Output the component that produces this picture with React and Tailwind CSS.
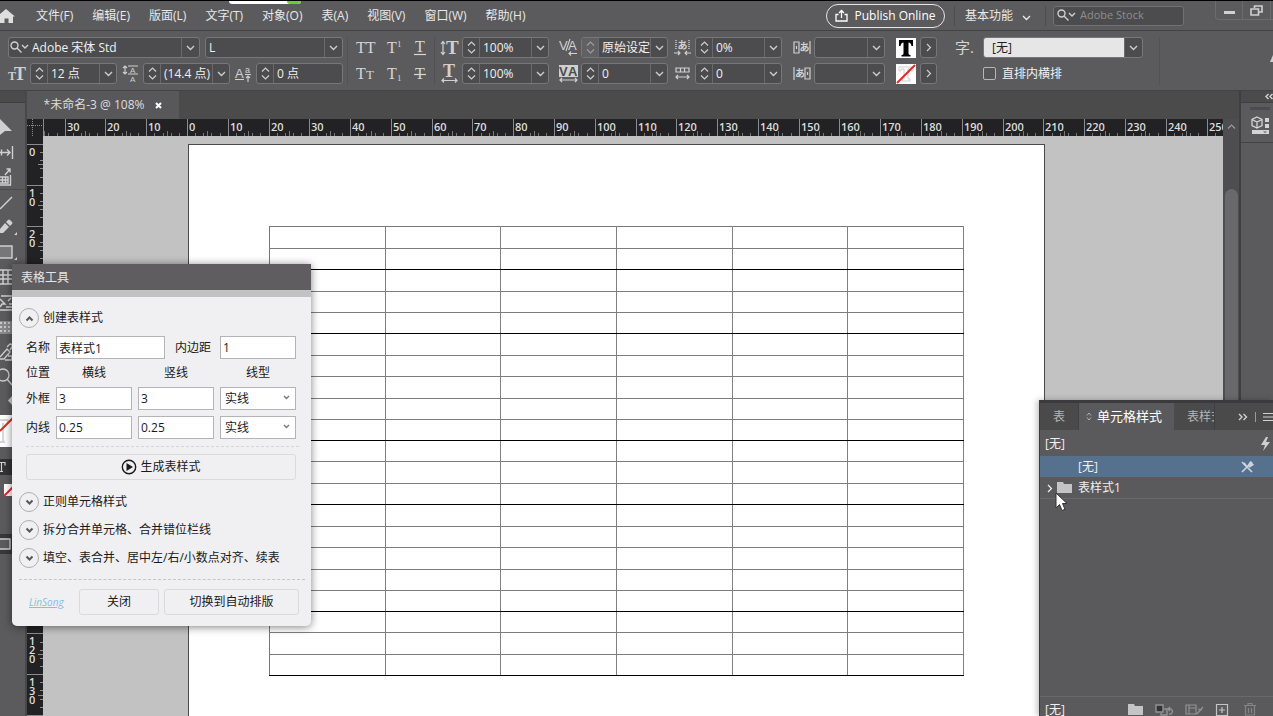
import React from "react";

const FONT = "font-['Open_Sans','Noto_Sans_CJK_SC',sans-serif]";

function Svg({ w = 16, h = 16, children, className = "" }) {
  return (
    <svg
      width={w}
      height={h}
      viewBox={`0 0 ${w} ${h}`}
      fill="none"
      stroke="currentColor"
      strokeWidth="1.4"
      aria-hidden="true"
      className={`shrink-0 overflow-visible ${className}`}
    >
      {children}
    </svg>
  );
}

const Chevron = ({ className = "" }) => (
  <Svg w={9} h={6} className={className}>
    <path d="M1 1l3.500 3.500L8 1" />
  </Svg>
);

const SerifT = ({ x, y, size = 16, children = "T", bold = false, fill = "currentColor" }) => (
  <text
    x={x}
    y={y}
    fontSize={size}
    fontFamily="'Liberation Serif', serif"
    fontWeight={bold ? 700 : 400}
    fill={fill}
    stroke="none"
  >
    {children}
  </text>
);

/* ---------- Menu bar ---------- */

const menus = ["文件(F)", "编辑(E)", "版面(L)", "文字(T)", "对象(O)", "表(A)", "视图(V)", "窗口(W)", "帮助(H)"];

function MenuBar() {
  return (
    <header className="relative flex h-[31px] shrink-0 items-center border-t border-b border-t-black border-b-[#424244] bg-[#5b5b5d] text-[#e8e8e8]">
      <a href="#home" aria-label="主页" className="mr-[21px] w-[15px] overflow-hidden text-[#dedede]">
        <Svg w={15} h={14}>
          <path d="M6 0l9 7.500h-2V14H8.500V9.500h-4V14H0V5z" fill="currentColor" stroke="none" />
        </Svg>
      </a>
      <nav className="flex gap-[19px]">
        {menus.map((m) => (
          <button key={m} type="button" className="whitespace-nowrap leading-[18px]">
            {m}
          </button>
        ))}
      </nav>
      <div className="absolute top-0 left-[229px] flex h-[3px] w-[72px] justify-end rounded-b-sm bg-white">
        <span className="w-[14px] rounded-b-full bg-[#62cf38]" />
      </div>

      <div className="ml-auto flex items-center">
        <button
          type="button"
          className="mr-[9px] flex h-6 w-[119px] items-center justify-center gap-[6px] rounded-full border border-[#e6e6e6] text-white"
        >
          <Svg w={13} h={13}>
            <path d="M3.500 5.500H1v6.500h11V5.500H9.500M6.500 9V1.500M4 4l2.500-2.500L9 4" strokeWidth="1.300" />
          </Svg>
          <span className="text-[12px] whitespace-nowrap">Publish Online</span>
        </button>
        <span className="mr-[10px] h-5 w-px bg-[#4e4e50]" />
        <button type="button" className="mr-[14px] flex items-center gap-[9px]">
          基本功能
          <Chevron className="mt-1" />
        </button>
        <span className="mr-[7px] h-5 w-px bg-[#4e4e50]" />
        <label className="mr-[31px] flex h-5 w-[131px] items-center rounded-[3px] border border-[#717173] bg-[#4c4c4e] pl-[3px]">
          <SearchIcon />
          <input
            type="search"
            aria-label="Adobe Stock"
            placeholder="Adobe Stock"
            className="ml-1 w-full min-w-0 bg-transparent text-[11px] outline-none placeholder:text-[#8e8e90]"
          />
        </label>
        <div className="-mt-[10px] flex h-[19px] rounded-bl border-b border-l border-[#6c6c6e]">
          <button type="button" aria-label="最小化" className="flex w-[27px] items-center justify-center border-r border-[#6c6c6e]">
            <span className="mt-1 h-[3px] w-[11px] bg-[#d0d0d0]" />
          </button>
          <button type="button" aria-label="还原" className="flex w-[28px] items-center justify-center border-r border-[#6c6c6e] text-[#d0d0d0]">
            <Svg w={13} h={11}>
              <path d="M4.500 3V1h7.500v6H8.500M1 4h7.500v6H1z" strokeWidth="1.600" />
            </Svg>
          </button>
          <span className="w-[2px]" />
        </div>
      </div>
    </header>
  );
}

function SearchIcon() {
  return (
    <Svg w={19} h={13} className="text-[#d0d0d0]">
      <circle cx="4.500" cy="4.500" r="3.500" />
      <path d="M7 7l4.500 4.500M12 4l3 3 3-3" />
    </Svg>
  );
}

/* ---------- Control bar ---------- */

const fieldBox = "flex h-[21px] shrink-0 overflow-hidden rounded-[3px] border border-[#77777a] bg-[#4c4c4f]";

function Combo({ label, value, stepper = true, arrow = true, width = "w-[87px]", muted = false }) {
  return (
    <div className={`${fieldBox} ${width}`}>
      {stepper && (
        <span className={`flex w-[17px] shrink-0 flex-col items-center justify-between border-r border-[#69696c] py-[3px] ${muted ? "bg-[#616164] text-[#9c9c9e]" : "text-[#cdcdcd]"}`}>
          <button type="button" aria-label={`${label} 增加`}>
            <Svg w={9} h={5} className="block"><path d="M1 4.500L4.500 1 8 4.500" strokeWidth="1.200" /></Svg>
          </button>
          <button type="button" aria-label={`${label} 减少`}>
            <Svg w={9} h={5} className="block"><path d="M1 .5L4.500 4 8 .5" strokeWidth="1.200" /></Svg>
          </button>
        </span>
      )}
      <input
        aria-label={label}
        defaultValue={value}
        className="w-0 min-w-0 flex-1 bg-transparent pl-[3px] text-[12px] text-[#f0f0f0] outline-none"
      />
      {arrow && (
        <button type="button" aria-label={`${label} 选项`} className="flex w-[17px] shrink-0 items-center justify-center border-l border-[#69696c] text-[#cdcdcd]">
          <Chevron />
        </button>
      )}
    </div>
  );
}

function DarkSelect({ label, value, width, search = false, light = false }) {
  return (
    <div className={`${fieldBox} ${width} relative`}>
      {search && <span className="flex items-center pl-px"><SearchIcon /></span>}
      <select
        aria-label={label}
        className={`min-w-0 flex-1 appearance-none text-[12px] leading-[19px] outline-none ${
          light ? "mr-[18px] bg-[#e6e6e6] pl-2 text-[#202020]" : "bg-transparent pl-[3px] text-[#f0f0f0]"
        }`}
      >
        <option>{value}</option>
      </select>
      <span className="pointer-events-none absolute inset-y-0 right-0 flex w-[18px] items-center justify-center border-l border-[#69696c] text-[#cdcdcd]">
        <Chevron />
      </span>
    </div>
  );
}

const IconCell = ({ w = "w-[19px]", children }) => (
  <span className={`flex h-[21px] ${w} shrink-0 items-center justify-center text-[#d0d0d0]`}>{children}</span>
);

const Pair = ({ className = "", children }) => (
  <div className={`flex shrink-0 flex-col gap-[5px] ${className}`}>{children}</div>
);

const Row = ({ gap = "gap-[3px]", children }) => <div className={`flex items-center ${gap}`}>{children}</div>;

const Divider = ({ className = "" }) => <span className={`h-[48px] w-px shrink-0 bg-[#525254] ${className}`} />;

const SizeIcon = () => (
  <Svg w={19} h={16}><SerifT x={0} y={14} size={12} bold /><SerifT x={6} y={14} size={18} bold /></Svg>
);
const LeadingIcon = () => (
  <Svg w={17} h={17}>
    <path d="M3 1v8M1 3l2-2 2 2M1 7l2 2 2-2M6 1h10M6 9h10" strokeWidth="1.100" />
    <text x="8" y="8" fontSize="8" fill="currentColor" stroke="none" fontFamily="Liberation Sans">A</text>
    <text x="8" y="16.500" fontSize="8" fill="currentColor" stroke="none" fontFamily="Liberation Sans">A</text>
  </Svg>
);
const BaselineIcon = () => (
  <Svg w={17} h={16}>
    <text x="0" y="12" fontSize="13" fill="currentColor" stroke="none" fontFamily="Liberation Sans">A</text>
    <text x="10" y="7" fontSize="9" fill="currentColor" stroke="none" fontFamily="Liberation Sans">a</text>
    <path d="M0 13.500h9M10 8.500h6M13 16v-6M11 12l2-2 2 2" strokeWidth="1.100" />
  </Svg>
);
const VScaleIcon = () => (
  <Svg w={19} h={16}>
    <path d="M3 2v12M1 4l2-2.500L5 4M1 12l2 2.500L5 12" strokeWidth="1.200" />
    <SerifT x={6} y={14} size={19} bold />
  </Svg>
);
const HScaleIcon = () => (
  <Svg w={17} h={18}>
    <SerifT x={2} y={12} size={18} bold />
    <path d="M1 15.500h15M3 13.500l-2 2 2 2M14 13.500l2 2-2 2" strokeWidth="1.200" />
  </Svg>
);
const SansVA = ({ fill = "currentColor", bold = false }) => (
  <g fontFamily="Liberation Sans" fontSize="13" fontWeight={bold ? 700 : 400} fill={fill} stroke="none">
    <text x="0" y="11">V</text>
    <text x="9" y="11">A</text>
  </g>
);
const KerningIcon = () => (
  <Svg w={19} h={17}>
    <SansVA />
    <path d="M11 0L7 12M10 14.500h8M12 12.500l-2 2 2 2" strokeWidth="1.100" />
  </Svg>
);
const TrackingIcon = () => (
  <Svg w={19} h={18}>
    <path d="M0 0h19v12H0z" fill="currentColor" stroke="none" />
    <SansVA fill="#4c4c4f" bold />
    <path d="M1 15h17M3 13l-2 2 2 2M16 13l2 2-2 2" strokeWidth="1.200" />
  </Svg>
);
const Kana = ({ x, y }) => (
  <text x={x} y={y} fontSize="10" fontWeight="700" fill="currentColor" stroke="none" fontFamily="Noto Sans CJK JP">あ</text>
);
const TsumeIcon = () => (
  <Svg w={17} h={17}>
    <Kana x={3.5} y={10} />
    <path d="M2 1v10M15 1v10" strokeDasharray="1 1" />
    <path d="M0 14h6M4 12l2 2-2 2M17 14h-6M13 12l-2 2 2 2" strokeWidth="1.100" />
  </Svg>
);
const GridIcon = () => (
  <Svg w={15} h={13}>
    <path d="M1 1h13v4H1zM5.500 1v4M9.500 1v4M1 10h13M3 8l-2 2 2 2M12 8l2 2-2 2" strokeWidth="1.200" />
  </Svg>
);
const AkiLeftIcon = () => (
  <Svg w={18} h={15}>
    <path d="M1 2h5v11H1zM3.500 6v3M17 1v13" strokeWidth="1.200" /><Kana x={6.5} y={11} />
  </Svg>
);
const AkiRightIcon = () => (
  <Svg w={18} h={15}>
    <path d="M12 2h5v11h-5zM14.500 6v3M1 1v13" strokeWidth="1.200" /><Kana x={2} y={11} />
  </Svg>
);

function TypeToggles() {
  const items = [
    ["全部大写", <Svg w={20} h={16} key="a"><SerifT x={0} y={13} size={16}>TT</SerifT></Svg>],
    ["上标", <Svg w={16} h={16} key="b"><SerifT x={0} y={13} size={16} /><SerifT x={10} y={7} size={9}>1</SerifT></Svg>],
    ["下划线", <Svg w={12} h={16} key="c"><SerifT x={1} y={12} size={16} /><path d="M0 14.500h12" strokeWidth="1.200" /></Svg>],
    ["小型大写字母", <Svg w={20} h={16} key="d"><SerifT x={0} y={13} size={16} /><SerifT x={10} y={13} size={13} /></Svg>],
    ["下标", <Svg w={16} h={16} key="e"><SerifT x={0} y={13} size={16} /><SerifT x={10} y={15} size={9}>1</SerifT></Svg>],
    ["删除线", <Svg w={12} h={16} key="f"><SerifT x={1} y={13} size={16} /><path d="M0 8.500h12" strokeWidth="1.200" /></Svg>],
  ];
  return (
    <div className="grid shrink-0 grid-cols-[20px_16px_12px] gap-x-[11px] gap-y-[5px]">
      {items.map(([name, icon]) => (
        <button key={name} type="button" aria-label={name} className="flex h-[21px] items-center justify-center text-[#d6d6d6]">
          {icon}
        </button>
      ))}
    </div>
  );
}

const MoreButton = ({ label }) => (
  <button type="button" aria-label={label} className={`${fieldBox} w-[17px] items-center justify-center text-[#cdcdcd]`}>
    <Svg w={6} h={9}><path d="M1 1l3.500 3.500L1 8" strokeWidth="1.200" /></Svg>
  </button>
);

function ControlBar() {
  return (
    <section aria-label="控制" className="relative flex h-[60px] shrink-0 items-center overflow-hidden border-b border-[#434345] bg-[#5b5b5d] pl-2">
      <Pair>
        <Row gap="gap-[5px]">
          <DarkSelect label="字体" value="Adobe 宋体 Std" width="w-[192px]" search />
          <DarkSelect label="字体样式" value="L" width="w-[138px]" />
        </Row>
        <Row>
          <IconCell><SizeIcon /></IconCell>
          <Combo label="字号" value="12 点" />
          <IconCell w="w-[20px]"><LeadingIcon /></IconCell>
          <Combo label="行距" value="(14.4 点)" />
          <IconCell w="w-[20px]"><BaselineIcon /></IconCell>
          <Combo label="基线偏移" value="0 点" arrow={false} />
        </Row>
      </Pair>
      <Divider className="mr-[8px] ml-[4px]" />
      <TypeToggles />
      <Divider className="mr-[5px] ml-[8px]" />
      <Pair>
        <Row><IconCell><VScaleIcon /></IconCell><Combo label="垂直缩放" value="100%" /></Row>
        <Row><IconCell><HScaleIcon /></IconCell><Combo label="水平缩放" value="100%" /></Row>
      </Pair>
      <Pair className="ml-[10px]">
        <Row><IconCell><KerningIcon /></IconCell><Combo label="字偶间距" value="原始设定" muted /></Row>
        <Row><IconCell><TrackingIcon /></IconCell><Combo label="字符间距" value="0" /></Row>
      </Pair>
      <Pair className="ml-[5px]">
        <Row><IconCell><TsumeIcon /></IconCell><Combo label="比例间距" value="0%" /></Row>
        <Row><IconCell><GridIcon /></IconCell><Combo label="网格指定格数" value="0" /></Row>
      </Pair>
      <Pair className="ml-[10px]">
        <Row><IconCell><AkiLeftIcon /></IconCell><Combo label="字符前挤压间距" value="" stepper={false} width="w-[71px]" /></Row>
        <Row><IconCell><AkiRightIcon /></IconCell><Combo label="字符后挤压间距" value="" stepper={false} width="w-[71px]" /></Row>
      </Pair>
      <Pair className="ml-[11px]">
        <Row gap="gap-[4px]">
          <button type="button" aria-label="填色">
            <Svg w={20} h={20}><path d="M0 0h20v20H0z" fill="#fff" stroke="none" /><path d="M3 2h14v6h-1.500Q15 4.500 12.500 4.500v11q0 1.500 2 1.500v1.500H5.500V17q2 0 2-1.500v-11Q5 4.500 4.500 8H3z" fill="#000" stroke="none" /></Svg>
          </button>
          <MoreButton label="填色选项" />
        </Row>
        <Row gap="gap-[4px]">
          <button type="button" aria-label="描边">
            <Svg w={20} h={20}><path d="M0 0h20v20H0z" fill="#fff" stroke="none" /><path d="M3 3h14v4h-2V5h-3v10h2v2H6v-2h2V5H5v2H3z" stroke="#cfcfcf" strokeWidth="1" /><path d="M1 19L19 1" stroke="#dc2b22" strokeWidth="2" /></Svg>
          </button>
          <MoreButton label="描边选项" />
        </Row>
      </Pair>
      <span className="mb-[28px] ml-[18px] w-[28px] shrink-0 text-[15px] leading-5 text-[#d6d6d6]">字.</span>
      <Pair>
        <DarkSelect label="字符样式" value="[无]" width="w-[160px]" light />
        <label className="flex h-[21px] items-center gap-[6px] text-[12px] text-[#f0f0f0]">
          <input type="checkbox" className="h-[13px] w-[13px] appearance-none rounded-[2px] border border-[#b6b6b8] bg-[#555557]" />
          直排内横排
        </label>
      </Pair>
      <Divider className="ml-[16px]" />
      <span className="absolute right-0 top-6 text-[#d0d0d0]">
        <Svg w={3} h={7}><path d="M3 0v7H0z" fill="currentColor" stroke="none" /></Svg>
      </span>
    </section>
  );
}

/* ---------- Tool strip ---------- */

const tools = [
  ["选择工具", <path key="p" d="M0 4l12 12H5l-5 4z" fill="currentColor" stroke="none" />],
  ["间隙工具", <path key="p" d="M12.500 6v13M0 12.500h10M7 9.500l3 3-3 3M1.500 9.500v6" />],
  ["内容收集器", <path key="p" d="M0 12h8v6H0M0 15h8M2.500 12v6M5.500 12v6M10.500 10v10H0M5 10l5-6M6.500 4H10v3.500" />],
  ["直线工具", <path key="p" d="M0 19L12 7" />],
  ["铅笔工具", <g key="p" fill="currentColor" stroke="none"><path d="M0 14l5-6 4 4-6 6H0zM6 7l2-2q1-1 2 0l2 2q1 1 0 2l-2 2zM17 17v3h-3z" /></g>],
  ["矩形工具", <g key="p"><path d="M-2 6h14v12H-2z" fill="#77777a" /><path d="M17 17v3h-3z" fill="currentColor" stroke="none" /></g>],
  ["表格工具", <path key="p" d="M0 5h12M0 10h12M0 14h12M0 19h12M3 5v14M8 5v14" />],
  ["自由变换", <path key="p" d="M0 9l5 5H2l-2 3M1 6h11M8 11l3-3M6 17h6M0 20h12M9 14h3" />],
  ["渐变羽化", <g key="p"><path d="M0 6h12v13H0z" fill="#8a8a8c" stroke="none" /><path d="M0 8h12M0 12h12M0 16h12" strokeDasharray="2 2" stroke="#c8c8c8" strokeWidth="2" /></g>],
  ["吸管工具", <path key="p" d="M0 17l7-8 3 3-6 7H0M7 7l3-3q3 0 2 3l-2 3M5 20h7v-4H8" />],
  ["缩放工具", <g key="p"><circle cx="3" cy="10" r="6" /><path d="M7 14l5 6" /></g>],
  ["交换填色和描边", <path key="p" d="M12 6v9l-4-4.500z" fill="currentColor" stroke="none" />],
];

function ToolStrip() {
  return (
    <aside className="flex w-[27px] shrink-0 flex-col overflow-hidden border-r-2 border-[#48484a] bg-[#5b5b5d] text-[#d0d0d0]">
      <div className="h-3 shrink-0 border-b border-[#3f3f41] bg-[#4b4b4c]" />
      <div className="flex flex-col pt-3">
        {tools.map(([name, icon], i) => (
          <button key={name} type="button" aria-label={name} className={`h-[25px] ${i === 3 ? "shadow-[0_-1px_0_#4c4c4e]" : ""}`}>
            <Svg w={20} h={25} className="block">{icon}</Svg>
          </button>
        ))}
      </div>
      <button type="button" aria-label="填色无" className="h-8">
        <Svg w={25} h={32} className="block">
          <path d="M0 0h25v32H0z" fill="#fff" stroke="none" />
          <path d="M0 5h8v4M3 8v18M0 27h5" stroke="#c8c8c8" />
          <path d="M0 16L16 0" stroke="#dc2b22" strokeWidth="2" />
        </Svg>
      </button>
      <button type="button" aria-label="格式针对文本" className="mt-3 h-4 bg-[#333336]">
        <Svg w={25} h={16} className="block"><path d="M0 3.500h5v3M1.500 3v10M0 12.500h3" strokeWidth="1.200" /></Svg>
      </button>
      <button type="button" aria-label="应用无" className="mt-[9px] h-3">
        <Svg w={25} h={12} className="block"><path d="M4 0h12v12H4z" fill="#fff" stroke="none" /><path d="M4 12L16 0" stroke="#dc2b22" strokeWidth="2" /></Svg>
      </button>
      <button type="button" aria-label="屏幕模式" className="mt-[38px] h-5 bg-[#38383a]">
        <Svg w={25} h={20} className="block"><path d="M-2 5h12v10H-2z" fill="#5b5b5d" /></Svg>
      </button>
    </aside>
  );
}

/* ---------- Rulers ---------- */

const STEP = 40.78;

function HorizontalRuler() {
  const marks = [];
  for (let mm = -35; mm <= 252; mm += 1) {
    const x = Math.round(160 + (mm * STEP) / 10) + 0.5;
    if (x < 16) continue;
    const major = mm % 10 === 0;
    const h = major ? 17 : mm % 5 === 0 ? 5 : 3;
    if (!major && mm % 5 !== 0 && mm % 2 !== 0) continue;
    marks.push(<path key={mm} d={`M${x} ${17 - h}v${h}`} stroke={major ? "#8c8c8e" : "#77777a"} strokeWidth="1" />);
    if (major)
      marks.push(
        <text key={`t${mm}`} x={x + 1.5} y="12" fontSize="11" fontWeight="600" fill="#dcdcdc" stroke="none" fontFamily="'Open Sans', sans-serif">
          {Math.abs(mm)}
        </text>
      );
  }
  return (
    <svg className="block h-[17px] w-full bg-[#222224]" aria-label="水平标尺">
      <path d="M0 6.500h16M5.500 0v17" stroke="#8a8a8c" strokeDasharray="1 1" />
      <path d="M16.500 0v17" stroke="#8a8a8c" />
      {marks}
    </svg>
  );
}

function VerticalRuler() {
  const marks = [];
  for (let mm = -1; mm <= 140; mm += 1) {
    const y = Math.round(8 + (mm * STEP) / 10) + 0.5;
    const major = mm % 10 === 0;
    if (!major && mm % 5 !== 0 && mm % 2 !== 0) continue;
    const w = major ? 16 : mm % 5 === 0 ? 5 : 3;
    marks.push(<path key={mm} d={`M${16 - w} ${y}h${w}`} stroke={major ? "#8c8c8e" : "#8a8a8c"} />);
    if (major)
      String(mm).split("").forEach((d, i) =>
        marks.push(
          <text key={`${mm}-${i}`} x="2" y={y + 11 + i * 9} fontSize="11" fontWeight="600" fill="#dcdcdc" fontFamily="'Open Sans', sans-serif">
            {d}
          </text>
        )
      );
  }
  return (
    <svg className="block h-full w-4 shrink-0 bg-[#222224]" aria-label="垂直标尺">
      {marks}
    </svg>
  );
}

/* ---------- Document ---------- */

const heavyRows = [1, 4, 9, 12, 17, 20];
const tallRows = [0, 2, 5, 7, 11, 13, 15, 19];

function DocumentTable() {
  return (
    <table className="w-[695px] table-fixed border-collapse border border-t-[#777] border-r-[#777] border-b-black border-l-[#777]">
      <tbody>
        {Array.from({ length: 21 }, (_, r) => (
          <tr key={r} className={tallRows.includes(r) ? "h-[22px]" : "h-[21px]"}>
            {Array.from({ length: 6 }, (_, c) => (
              <td
                key={c}
                className={`border-r border-b border-r-[#808080] p-0 ${heavyRows.includes(r) ? "border-b-black" : "border-b-[#7d7d7d]"}`}
              />
            ))}
          </tr>
        ))}
      </tbody>
    </table>
  );
}

function DocumentArea() {
  return (
    <main className="flex min-w-0 flex-1 flex-col bg-[#4b4b4c]">
      <div className="flex h-7 shrink-0">
        <div className="flex w-[152px] items-center justify-center gap-[11px] bg-[#58585a] text-[12px] text-[#dedede]">
          <span className="whitespace-nowrap">*未命名-3 @ 108%</span>
          <button type="button" aria-label="关闭文档" className="text-white">
            <Svg w={7} h={7}><path d="M1 1l5 5M6 1L1 6" strokeWidth="2" /></Svg>
          </button>
        </div>
      </div>
      <div className="flex min-h-0 flex-1">
        <div className="flex min-w-0 flex-1 flex-col">
          <HorizontalRuler />
          <div className="flex min-h-0 flex-1">
            <VerticalRuler />
            <div className="min-w-0 flex-1 overflow-hidden bg-[#c2c2c2] pt-[8px] pl-[145px]">
              <div className="h-[1200px] w-[857px] border border-[#4a4a4a] bg-white pt-[81px] pl-[80px]">
                <DocumentTable />
              </div>
            </div>
          </div>
        </div>
        <div className="flex w-4 shrink-0 flex-col items-center bg-[#4e4e50] pt-[5px] text-[#9a9a9c]">
          <Svg w={9} h={5}><path d="M1 4.500L4.500 1 8 4.500" strokeWidth="1.200" /></Svg>
          <span className="mt-[60px] w-[13px] flex-1 rounded-full bg-[#69696b]" />
        </div>
      </div>
    </main>
  );
}

function Dock() {
  return (
    <aside className="flex w-[34px] shrink-0 flex-col border-l-2 border-[#3f3f41] bg-[#5b5b5d] text-[#d4d4d4]">
      <button type="button" aria-label="展开面板" className="flex h-3 items-center justify-end border-b border-[#3f3f41] bg-[#4b4b4c]">
        <Svg w={8} h={7}><path d="M3.500 1L1 3.500 3.500 6M7.500 1L5 3.500 7.500 6" /></Svg>
      </button>
      <div className="flex h-[40px] flex-col items-center gap-[6px] border-b border-[#434345] pt-1 pl-[6px]">
        <span className="h-[3px] w-5 bg-[#4c4c4e]" />
        <button type="button" aria-label="库">
          <Svg w={18} h={19}>
            <path d="M6 1l5 2.500v6L6 12 1 9.500v-6zM1 3.500L6 6l5-2.500M6 6v6" strokeWidth="1.300" />
            <path d="M14 2h4v4h-4zM14 8h4v4h-4zM1 14h17v4H1z" fill="currentColor" stroke="none" />
            <path d="M12 15.500h4l-2 1.500z" fill="#5b5b5d" stroke="none" />
          </Svg>
        </button>
      </div>
    </aside>
  );
}

/* ---------- Table tool dialog ---------- */

const lightField = "h-[23px] w-full min-w-0 border border-[#b4b4b8] bg-white px-[2px] text-[12px] outline-none";

function LineSelect({ label }) {
  return (
    <div className="relative">
      <select aria-label={label} className={`${lightField} appearance-none pl-[4px]`}>
        <option>实线</option>
        <option>虚线</option>
      </select>
      <Svg w={7} h={5} className="pointer-events-none absolute top-2 right-[6px] text-[#77777a]">
        <path d="M1 1l2.500 2.500L6 1" />
      </Svg>
    </div>
  );
}

function SectionToggle({ open = false, children }) {
  return (
    <button type="button" aria-expanded={open} className="flex h-5 items-center gap-1 whitespace-nowrap">
      <span className="flex h-5 w-5 items-center justify-center rounded-full border border-[#aeaeb2] text-[#58585c]">
        <Svg w={7} h={5}><path d={open ? "M.5 4.500l3-3 3 3" : "M.5.5l3 3 3-3"} strokeWidth="2" /></Svg>
      </span>
      {children}
    </button>
  );
}

const paleButton = "flex h-[26px] items-center justify-center rounded-[3px] border border-[#dadade] bg-[#f0eff2]";

function TableDialog() {
  return (
    <section
      role="dialog"
      aria-labelledby="table-tool-title"
      className="absolute top-[264px] left-3 w-[299px] overflow-hidden rounded-b-[5px] bg-[#f0eff2] text-[12px] leading-4 text-[#1a1a1a] shadow-[0_1px_8px_rgba(0,0,0,0.5)]"
    >
      <h2 id="table-tool-title" className="flex h-[26px] items-center bg-[#5f5d60] pt-px pl-[9px] text-[#e6e6e6]">表格工具</h2>
      <div className="h-[7px] bg-[#c2c2c2]" />
      <div className="flex flex-col pt-[11px] pr-[6px] pb-[11px] pl-[7px]">
        <SectionToggle open>创建表样式</SectionToggle>
        <div className="mt-2 mr-[9px] ml-[7px] flex items-center">
          <label htmlFor="style-name" className="w-[30px] shrink-0">名称</label>
          <input id="style-name" defaultValue="表样式1" className={lightField} />
          <label htmlFor="style-padding" className="mr-[9px] ml-[10px] shrink-0">内边距</label>
          <span className="w-[76px] shrink-0"><input id="style-padding" defaultValue="1" className={lightField} /></span>
        </div>
        <div className="mt-[6px] mr-[9px] ml-[7px] grid grid-cols-[24px_1fr_1fr_1fr] items-center gap-x-[6px] gap-y-[6px]">
          <span>位置</span>
          <span className="text-center">横线</span>
          <span className="text-center">竖线</span>
          <span className="text-center">线型</span>
          <span>外框</span>
          <input aria-label="外框横线" defaultValue="3" className={lightField} />
          <input aria-label="外框竖线" defaultValue="3" className={lightField} />
          <LineSelect label="外框线型" />
          <span>内线</span>
          <input aria-label="内线横线" defaultValue="0.25" className={lightField} />
          <input aria-label="内线竖线" defaultValue="0.25" className={lightField} />
          <LineSelect label="内线线型" />
        </div>
        <div className="mt-[7px] mr-[6px] ml-[7px] border-t border-dashed border-[#d0dad6]" />
        <button type="button" className={`${paleButton} mt-[7px] mr-[9px] ml-[7px] gap-[3px]`}>
          <Svg w={16} h={16}>
            <circle cx="8" cy="8" r="6.700" />
            <path d="M5.500 4l6.500 4-6.500 4z" fill="currentColor" stroke="none" />
          </Svg>
          生成表样式
        </button>
        <div className="mt-3 flex flex-col gap-2">
          <SectionToggle>正则单元格样式</SectionToggle>
          <SectionToggle>拆分合并单元格、合并错位栏线</SectionToggle>
          <SectionToggle>填空、表合并、居中左/右/小数点对齐、续表</SectionToggle>
        </div>
        <div className="mt-[11px] border-t border-dashed border-[#b9cbc4]" />
        <div className="mt-[9px] mr-[6px] flex items-center">
          <a href="#linsong" className="w-[60px] shrink-0 pl-[10px] text-[10px] text-[#7cc4de] italic underline">LinSong</a>
          <button type="button" className={`${paleButton} mr-[5px] w-[80px] shrink-0`}>关闭</button>
          <button type="button" className={`${paleButton} flex-1`}>切换到自动排版</button>
        </div>
      </div>
    </section>
  );
}

/* ---------- Cell styles panel ---------- */

const Folder = () => (
  <Svg w={15} h={12}>
    <path d="M0 0h6l1 2h8v9H0z" fill="currentColor" stroke="none" />
  </Svg>
);

function CellStylesPanel() {
  return (
    <section aria-label="单元格样式" className="absolute top-[400px] right-0 bottom-0 flex w-[234px] flex-col overflow-hidden border-t-[3px] border-l border-[#3b3b3d] bg-[#5a5a5c] text-[12px] text-[#f0f0f0] shadow-[-2px_0_6px_rgba(0,0,0,0.25)]">
      <div role="tablist" className="flex h-[27px] shrink-0 bg-[#4a4a4b] text-[#b4b4b6]">
        <button role="tab" type="button" className="w-[39px] border-r border-[#404042]">表</button>
        <button role="tab" type="button" aria-selected="true" className="flex w-[95px] items-center pl-[7px] gap-[5px] bg-[#5a5a5c] text-[13px] text-white">
          <Svg w={6} h={9} className="text-[#b4b4b6]"><path d="M1 3.500L3 1l2 2.500M1 5.500L3 8l2-2.500" strokeWidth="1" /></Svg>
          单元格样式
        </button>
        <button role="tab" type="button" className="w-[41px] overflow-hidden border-r border-[#404042] pl-[13px] text-left whitespace-nowrap">
          <span className="block w-[27px] overflow-hidden">表样式</span>
        </button>
        <div className="ml-auto flex items-center gap-[7px] text-[#d0d0d0]">
          <button type="button" aria-label="更多面板">
            <Svg w={10} h={8}><path d="M1 1l3 3-3 3M5.500 1l3 3-3 3" /></Svg>
          </button>
          <span className="h-[10px] w-px bg-[#9a9a9c]" />
          <button type="button" aria-label="面板菜单">
            <Svg w={10} h={10}><path d="M0 1.500h10M0 5h10M0 8.500h10" strokeWidth="1" /></Svg>
          </button>
        </div>
      </div>
      <div className="flex h-[26px] shrink-0 items-center justify-between pt-px pr-[3px] pl-[5px]">
        [无]
        <button type="button" aria-label="快速应用" className="text-[#d0d0d0]">
          <Svg w={9} h={14}><path d="M5 0L0 8h4l-2 6 7-9H5l2-5z" fill="currentColor" stroke="none" /></Svg>
        </button>
      </div>
      <ul className="flex-1">
        <li className="flex h-[21px] items-center justify-between bg-[#56718e] pr-5 pl-[38px]">
          [无]
          <Svg w={12} h={12} className="text-[#cdd6df]">
            <path d="M1 1l10 10M11 1L1 11" strokeWidth="1.600" />
            <path d="M7 5l2.500-3.500 2 2L8 6M3 2l2 3" strokeWidth="2" />
          </Svg>
        </li>
        <li className="relative flex h-[22px] items-center border-b border-[#69696b] pt-px pl-[7px]">
          <button type="button" aria-label="展开表样式1" className="mr-[4px]">
            <Svg w={6} h={9}><path d="M1 1l3.500 3.500L1 8" strokeWidth="1.200" /></Svg>
          </button>
          <span className="mr-[6px] text-[#c4c4c6]"><Folder /></span>
          表样式1
          <svg className="absolute top-[15px] left-[15px]" width="13" height="20" viewBox="0 0 13 20" aria-hidden="true">
            <path d="M1 1v15l3.500-3.500L7 18.500l3-1.200-2.500-5.800H12z" fill="#fff" stroke="#333" />
          </svg>
        </li>
      </ul>
      <footer className="flex h-5 shrink-0 items-start justify-between border-t border-[#69696b] pt-[4px] pr-[17px] pl-[5px] text-[#c4c4c6]">
        <span className="leading-[18px] text-[#f0f0f0]">[无]</span>
        <span className="flex gap-[12px] pt-[2px]">
          <button type="button" aria-label="新建样式组"><Folder /></button>
          <button type="button" aria-label="清除优先选项" className="text-[#929294]">
            <Svg w={18} h={12}><path d="M1 1h7v7H1z" fill="#333" /><path d="M9 5h3v6H6V9" /><path d="M13 5h3q3 2.500 0 5h-2M15 3l-2 2 2 2" /></Svg>
          </button>
          <button type="button" aria-label="清除非样式定义属性" className="text-[#929294]">
            <Svg w={19} h={12}><path d="M1 1h10v9H1zM4 1v9M4 4h7M12 10l6-7M13 5l4 1" strokeWidth="1.200" /></Svg>
          </button>
          <button type="button" aria-label="新建样式">
            <Svg w={12} h={12}><path d="M.5.5h11v11H.5zM6 3v6M3 6h6" strokeWidth="1.200" /></Svg>
          </button>
          <button type="button" aria-label="删除样式" className="ml-1 text-[#858587]">
            <Svg w={12} h={13}><path d="M0 2.500h12M4 2V.5h4V2M1.500 3v9h9V3M4.500 5v5M7.500 5v5" strokeWidth="1.200" /></Svg>
          </button>
        </span>
      </footer>
    </section>
  );
}

export default function App() {
  return (
    <div className={`relative flex h-screen flex-col overflow-hidden bg-[#4b4b4c] text-[12px] ${FONT}`}>
      <MenuBar />
      <ControlBar />
      <div className="flex min-h-0 flex-1">
        <ToolStrip />
        <DocumentArea />
        <Dock />
      </div>
      <TableDialog />
      <CellStylesPanel />
    </div>
  );
}
